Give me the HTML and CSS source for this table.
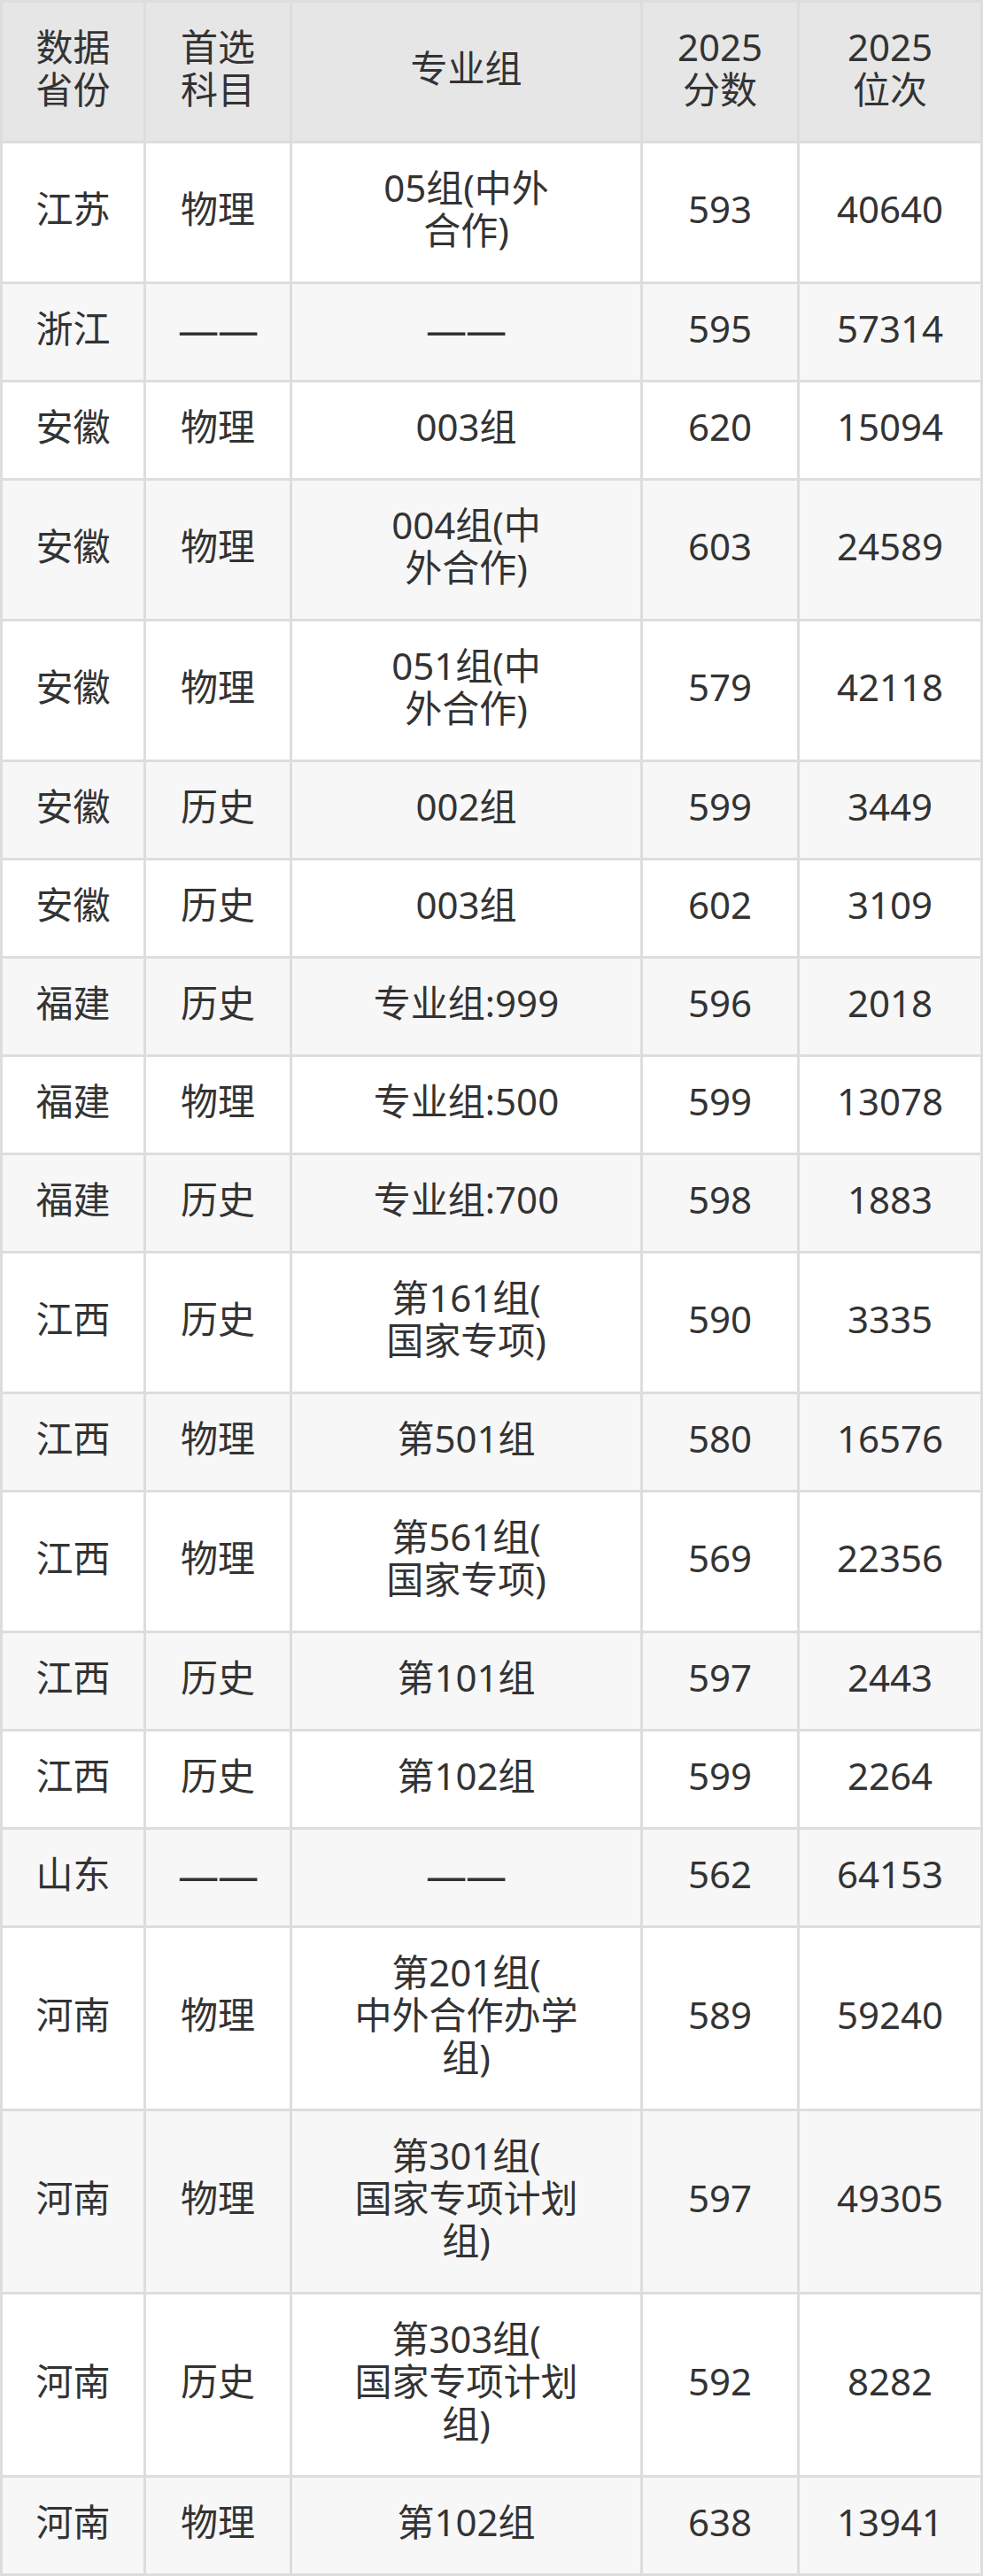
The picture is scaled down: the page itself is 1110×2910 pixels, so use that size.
FILE: index.html
```html
<!DOCTYPE html>
<html lang="zh-CN">
<head>
<meta charset="utf-8">
<title>分数线</title>
<link rel="stylesheet" href="styles.css">
</head>
<body>
<table class="score-table">
  <colgroup>
    <col class="c1"><col class="c2"><col class="c3"><col class="c4"><col class="c5">
  </colgroup>
  <thead>
    <tr><th>数据<br>省份</th><th>首选<br>科目</th><th>专业组</th><th>2025<br>分数</th><th>2025<br>位次</th></tr>
  </thead>
  <tbody>
    <tr><td>江苏</td><td>物理</td><td>05组(中外<br>合作)</td><td>593</td><td>40640</td></tr>
    <tr><td>浙江</td><td><span class="dash">——</span></td><td><span class="dash">——</span></td><td>595</td><td>57314</td></tr>
    <tr><td>安徽</td><td>物理</td><td>003组</td><td>620</td><td>15094</td></tr>
    <tr><td>安徽</td><td>物理</td><td>004组(中<br>外合作)</td><td>603</td><td>24589</td></tr>
    <tr><td>安徽</td><td>物理</td><td>051组(中<br>外合作)</td><td>579</td><td>42118</td></tr>
    <tr><td>安徽</td><td>历史</td><td>002组</td><td>599</td><td>3449</td></tr>
    <tr><td>安徽</td><td>历史</td><td>003组</td><td>602</td><td>3109</td></tr>
    <tr><td>福建</td><td>历史</td><td>专业组:999</td><td>596</td><td>2018</td></tr>
    <tr><td>福建</td><td>物理</td><td>专业组:500</td><td>599</td><td>13078</td></tr>
    <tr><td>福建</td><td>历史</td><td>专业组:700</td><td>598</td><td>1883</td></tr>
    <tr><td>江西</td><td>历史</td><td>第161组(<br>国家专项)</td><td>590</td><td>3335</td></tr>
    <tr><td>江西</td><td>物理</td><td>第501组</td><td>580</td><td>16576</td></tr>
    <tr><td>江西</td><td>物理</td><td>第561组(<br>国家专项)</td><td>569</td><td>22356</td></tr>
    <tr><td>江西</td><td>历史</td><td>第101组</td><td>597</td><td>2443</td></tr>
    <tr><td>江西</td><td>历史</td><td>第102组</td><td>599</td><td>2264</td></tr>
    <tr><td>山东</td><td><span class="dash">——</span></td><td><span class="dash">——</span></td><td>562</td><td>64153</td></tr>
    <tr><td>河南</td><td>物理</td><td>第201组(<br>中外合作办学<br>组)</td><td>589</td><td>59240</td></tr>
    <tr><td>河南</td><td>物理</td><td>第301组(<br>国家专项计划<br>组)</td><td>597</td><td>49305</td></tr>
    <tr><td>河南</td><td>历史</td><td>第303组(<br>国家专项计划<br>组)</td><td>592</td><td>8282</td></tr>
    <tr><td>河南</td><td>物理</td><td>第102组</td><td>638</td><td>13941</td></tr>
  </tbody>
</table>
</body>
</html>
```
FILE: styles.css
```css
html, body {
  margin: 0;
  padding: 0;
  background: #ffffff;
}

.score-table {
  width: 1110px;
  table-layout: fixed;
  border-collapse: separate;
  border-spacing: 3px;
  background: #dddddd;
  font-family: "Noto Sans", "Noto Sans CJK SC", sans-serif;
  font-size: 42px;
  line-height: 48px;
  color: #333333;
}

.c1 { width: 159px; }
.c2 { width: 162px; }
.c3 { width: 393px; }
.c4 { width: 174px; }
.c5 { width: 204px; }

.score-table th,
.score-table td {
  padding: 26px 6px 34px;
  text-align: center;
  vertical-align: middle;
  font-weight: normal;
  white-space: nowrap;
}

.score-table th {
  background: #e6e6e6;
}

.score-table tbody tr:nth-child(odd) td {
  background: #ffffff;
}

.score-table tbody tr:nth-child(even) td {
  background: #f7f7f7;
}

.dash {
  display: inline-block;
  letter-spacing: -1px;
  transform: scale(1.1);
}
```
